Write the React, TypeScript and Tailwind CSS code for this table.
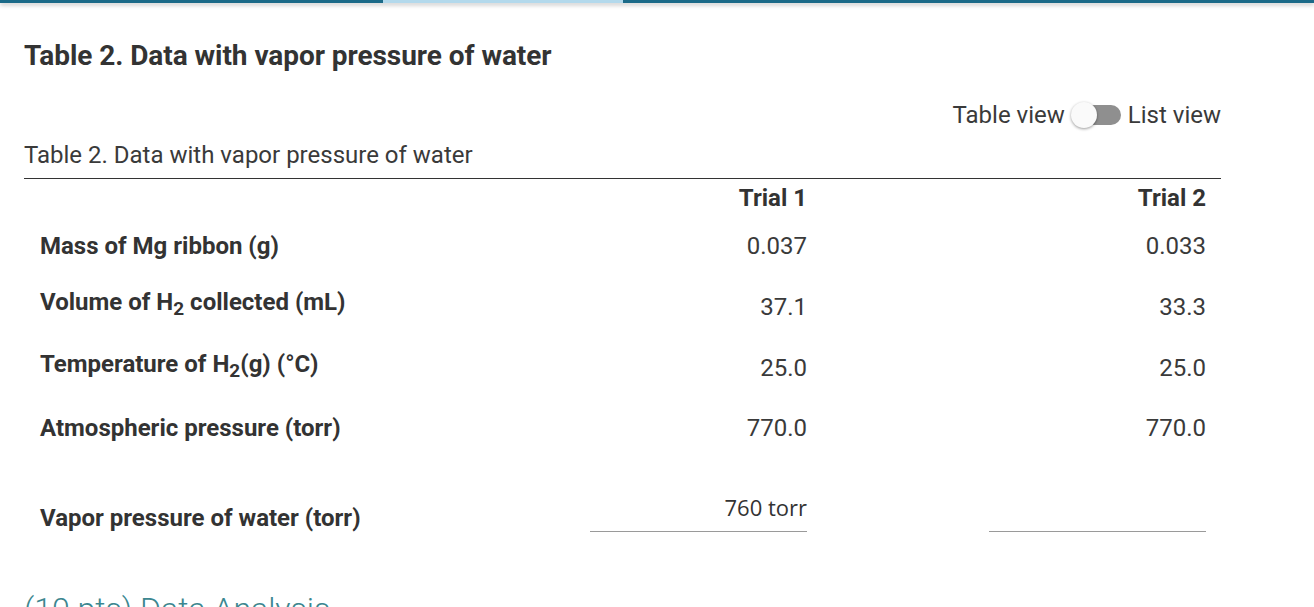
import React from "react";

const font = { fontFamily: "Roboto, 'Noto Sans', sans-serif" };

function Row({
  label,
  v1,
  v2,
  h,
  labelCls = "",
  valCls = "",
}: {
  label: React.ReactNode;
  v1: string;
  v2: string;
  h: string;
  labelCls?: string;
  valCls?: string;
}) {
  return (
    <div className={`grid grid-cols-3 items-center ${h}`}>
      <div className={`pl-[16px] text-[24px] font-bold leading-[28px] text-[#333] ${labelCls}`}>{label}</div>
      <div className={`pr-[15px] text-right text-[24px] leading-[28px] text-[#3a3a3a] ${valCls}`}>{v1}</div>
      <div className={`pr-[15px] text-right text-[24px] leading-[28px] text-[#3a3a3a] ${valCls}`}>{v2}</div>
    </div>
  );
}

export default function App() {
  return (
    <div className="min-h-[607px] w-full overflow-hidden bg-white" style={font}>
      <div className="relative h-[3px] w-full bg-[#1b6a88] shadow-[0_2px_4px_rgba(0,0,0,0.25)]">
        <div className="absolute left-[383px] top-0 h-[3px] w-[240px] bg-[#b3d9ec]" />
      </div>
      <div className="ml-[24px] w-[1197px]">
        <h2 className="mt-[37px] text-[28px] font-bold leading-[32px] tracking-[-0.05px] text-[#333]">
          Table 2. Data with vapor pressure of water
        </h2>
        <div className="mt-[29px] flex h-[28px] items-center justify-end text-[24px] leading-[28px] text-[#3a3a3a]">
          <span>Table view</span>
          <div className="relative ml-[6px] mr-[7px] flex h-[28px] w-[50px] items-center">
            <div className="absolute left-[13px] h-[20px] w-[37px] rounded-full bg-[#8f8f8f]" />
            <div className="absolute left-0 h-[26px] w-[26px] rounded-full bg-[#fafafa] shadow-[0_1px_3px_rgba(0,0,0,0.4)]" />
          </div>
          <span>List view</span>
        </div>
        <div className="mt-[12px] text-[24px] leading-[28px] text-[#3a3a3a]">
          Table 2. Data with vapor pressure of water
        </div>
        <div className="mt-[9px] border-t border-[#333]">
          <div className="grid h-[37px] grid-cols-3 items-center text-[24px] font-bold leading-[28px] text-[#333]">
            <div />
            <div className="pr-[15px] text-right">Trial 1</div>
            <div className="pr-[15px] text-right">Trial 2</div>
          </div>
          <Row label="Mass of Mg ribbon (g)" v1="0.037" v2="0.033" h="h-[60px]" />
          <Row
            label={
              <span>
                Volume of H<sub className="text-[19px]">2</sub> collected (mL)
              </span>
            }
            v1="37.1"
            v2="33.3"
            h="h-[58px]"
            labelCls="pb-[6px]"
            valCls="pt-[4px]"
          />
          <Row
            label={
              <span>
                Temperature of H<sub className="text-[19px]">2</sub>(g) (°C)
              </span>
            }
            v1="25.0"
            v2="25.0"
            h="h-[64px]"
            labelCls="pb-[4px]"
            valCls="pt-[4px]"
          />
          <Row label="Atmospheric pressure (torr)" v1="770.0" v2="770.0" h="h-[60px]" />
          <div className="grid h-[96px] grid-cols-3 items-start">
            <div className="pl-[16px] pt-[46px] text-[24px] font-bold leading-[28px] text-[#333]">
              Vapor pressure of water (torr)
            </div>
            <div className="flex justify-end pr-[15px] pt-[34px]">
              <div
                className="h-[40px] w-[217px] border-b border-[#9a9a9a] text-right text-[22px] leading-[30px] text-[#333]"
                style={{ fontFamily: "'Open Sans', sans-serif" }}
              >
                760 torr
              </div>
            </div>
            <div className="flex justify-end pr-[15px] pt-[34px]">
              <div className="h-[40px] w-[217px] border-b border-[#9a9a9a]" />
            </div>
          </div>
        </div>
        <h3 className="mt-[35px] text-[32px] font-light leading-[40px] text-[#3c8790]">
          (10 pts) Data Analysis
        </h3>
      </div>
    </div>
  );
}
